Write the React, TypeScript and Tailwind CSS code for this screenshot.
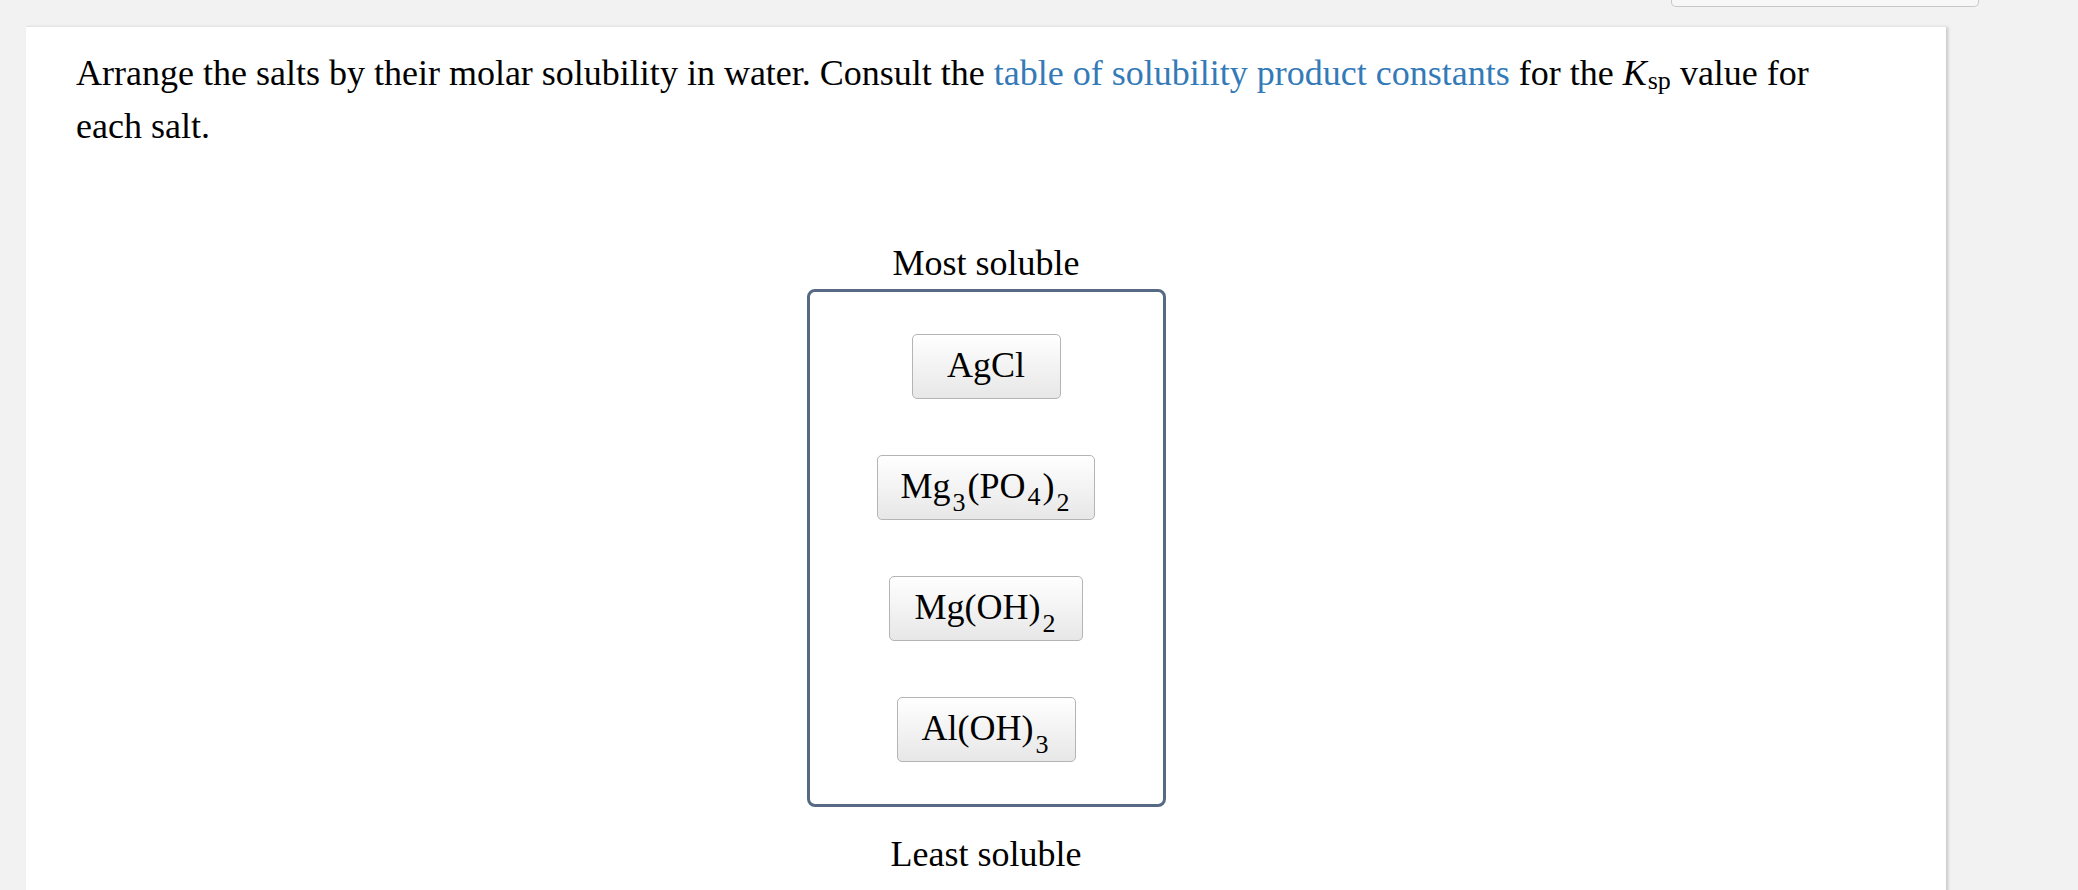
import React from "react";

const serif = "font-['Liberation_Serif','Times_New_Roman',Times,serif]";

type Part = string | { sub: string; low: "deep" | "shallow" };
type Salt = { id: string; width: string; parts: Part[] };

const salts: Salt[] = [
  { id: "agcl", width: "w-[149px]", parts: ["AgCl"] },
  {
    id: "mgpo4",
    width: "w-[218px]",
    parts: ["Mg", { sub: "3", low: "deep" }, "(PO", { sub: "4", low: "shallow" }, ")", { sub: "2", low: "deep" }],
  },
  { id: "mgoh", width: "w-[194px]", parts: ["Mg(OH)", { sub: "2", low: "deep" }] },
  { id: "aloh", width: "w-[179px]", parts: ["Al(OH)", { sub: "3", low: "deep" }] },
];

function Formula({ parts }: { parts: Part[] }) {
  return (
    <span className="whitespace-nowrap">
      {parts.map((p, i) =>
        typeof p === "string" ? (
          <span key={i}>{p}</span>
        ) : (
          <span
            key={i}
            className={`relative mx-[2px] text-[26px] leading-none ${p.low === "deep" ? "top-[13px]" : "top-[7px]"}`}
          >
            {p.sub}
          </span>
        )
      )}
    </span>
  );
}

function SaltTile({ salt }: { salt: Salt }) {
  return (
    <div
      className={`flex h-[65px] ${salt.width} items-center justify-center rounded-[5px] border-[1.5px] border-[#b4b4b4] bg-gradient-to-b from-white to-[#e7e7e7] pb-[4px] text-[36px] leading-none text-black`}
    >
      <Formula parts={salt.parts} />
    </div>
  );
}

export default function App() {
  return (
    <div className={`min-h-screen overflow-hidden bg-[#f2f2f2] ${serif}`}>
      {/* header tab peeking in from the top */}
      <div className="flex h-[26px] justify-end pr-[99px]">
        <div className="h-[7px] w-[308px] rounded-b-[5px] border-[1.5px] border-t-0 border-[#c8c8c8] bg-[#f7f7f7]" />
      </div>

      <div className="ml-[26px] h-[900px] w-[1920px] border-t border-[#e4e4e4] bg-white pl-[50px] pr-[80px] pt-[20px] shadow-[2px_1px_3px_rgba(0,0,0,0.18)]">
        <p className="text-[36px] leading-[53px] text-black">
          Arrange the salts by their molar solubility in water. Consult the{" "}
          <a href="#" className="text-[#337ab7]">
            table of solubility product constants
          </a>{" "}
          for the <i>K</i>
          <span className="relative top-[4px] ml-[1px] text-[26px] leading-none">sp</span> value for each salt.
        </p>

        <div className="-ml-[50px] -mr-[80px] mt-[90px] flex flex-col items-center">
          <div className="h-[40px] text-[36px] leading-[40px] text-black">Most soluble</div>
          <div className="mt-[6px] flex h-[518px] w-[359px] flex-col items-center gap-[56px] rounded-[8px] border-[3px] border-[#566a83] pt-[42px]">
            {salts.map((s) => (
              <SaltTile key={s.id} salt={s} />
            ))}
          </div>
          <div className="mt-[27px] h-[40px] text-[36px] leading-[40px] text-black">Least soluble</div>
        </div>
      </div>
    </div>
  );
}
